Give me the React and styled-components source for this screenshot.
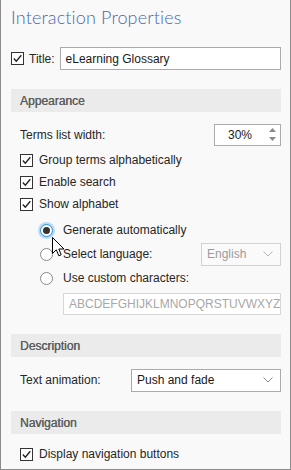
import React from "react";
import styled, { createGlobalStyle, css } from "styled-components";

const Global = createGlobalStyle`
  html, body { margin: 0; padding: 0; background: #f9f9f9; }
  #root { width: 291px; height: 470px; }
  * { box-sizing: border-box; }
`;

const Panel = styled.div`
  position: relative;
  width: 291px;
  height: 470px;
  background: #f9f9f9;
  border: 1px solid #8c8c8c;
  border-top: none;
  padding: 0 9px 0 10px;
  display: flex;
  flex-direction: column;
  font-family: "Liberation Sans", Arial, sans-serif;
  font-size: 12px;
  color: #262626;
  overflow: hidden;
`;

const Heading = styled.h1`
  margin: 5px 0 0 0;
  height: 25px;
  line-height: 25px;
  font-family: Lato, "Open Sans", sans-serif;
  font-weight: 300;
  font-size: 18px;
  color: #4b68ae;
  letter-spacing: 0.15px;
`;

const Row = styled.div`
  display: flex;
  align-items: center;
  height: ${(p) => p.$h || 22}px;
  margin-top: ${(p) => p.$mt || 0}px;
  padding-left: ${(p) => p.$indent || 0}px;
`;

const SectionHeader = styled.div`
  height: 23px;
  margin-top: ${(p) => p.$mt || 0}px;
  background: #ebebeb;
  padding-left: 9px;
  display: flex;
  align-items: center;
  color: #5e5e5e;
  font-size: 12px;
  font-weight: 400;
  text-shadow: 0.3px 0 0 #5e5e5e;
`;

const Body = styled.div`
  display: flex;
  flex-direction: column;
  padding-left: 9px;
`;

const Box = styled.span`
  width: 13px;
  height: 13px;
  flex: none;
  border: 1px solid #333;
  background: #fff;
  display: inline-flex;
  align-items: center;
  justify-content: center;
  margin-right: ${(p) => p.$mr || 6}px;
`;

const Label = styled.span`
  white-space: nowrap;
  color: ${(p) => (p.$disabled ? "#9a9a9a" : "#262626")};
`;

const Spacer = styled.span`
  flex: 1;
`;

const Gap = styled.span`
  flex: none;
  width: ${(p) => p.$w}px;
`;

const VGap = styled.div`
  height: ${(p) => p.$h}px;
`;

const TextInput = styled.div`
  height: ${(p) => p.$h || 23}px;
  flex: ${(p) => (p.$grow ? 1 : "none")};
  background: #fff;
  border: 1px solid ${(p) => p.$border || "#ababab"};
  display: flex;
  align-items: center;
  padding: 0 5px;
  color: ${(p) => p.$color || "#1a1a1a"};
  white-space: nowrap;
  overflow: hidden;
  font-size: 12px;
`;

const Spin = styled.div`
  width: 67px;
  height: 22px;
  background: #fff;
  border: 1px solid #ababab;
  display: flex;
  align-items: center;
  position: relative;
  padding-left: 13px;
  color: #1a1a1a;
`;

const SpinArrows = styled.div`
  position: absolute;
  right: 4px;
  top: 3px;
  display: flex;
  flex-direction: column;
  gap: 5px;
`;

const Select = styled.div`
  height: ${(p) => p.$h || 22}px;
  width: ${(p) => p.$w}px;
  flex: none;
  background: ${(p) => (p.$disabled ? "#fafafa" : "#fff")};
  border: 1px solid ${(p) => (p.$disabled ? "#d2d2d2" : "#ababab")};
  display: flex;
  align-items: center;
  justify-content: space-between;
  padding: 0 7px 0 5px;
  color: ${(p) => (p.$disabled ? "#9a9a9a" : "#1a1a1a")};
`;

const Radio = styled.span`
  width: 13px;
  height: 13px;
  flex: none;
  border-radius: 50%;
  background: #fff;
  margin: 0 10px 0 20px;
  display: inline-flex;
  align-items: center;
  justify-content: center;
  ${(p) =>
    p.$checked
      ? css`
          border: 1px solid #2e8ad8;
          box-shadow: 0 0 0 2px #b7dcf5;
        `
      : css`
          border: 1px solid #8a8a8a;
        `}
`;

const Dot = styled.span`
  width: 7px;
  height: 7px;
  border-radius: 50%;
  background: #333;
`;

const Cursor = styled.svg`
  position: absolute;
  left: 51px;
  top: 237px;
  pointer-events: none;
`;

const Check = () => (
  <svg width="11" height="11" viewBox="0 0 11 11">
    <path d="M1.8 5.6 L4.3 8.2 L9.3 2.2" fill="none" stroke="#222" strokeWidth="1.4" />
  </svg>
);

const Chevron = ({ color = "#8a8a8a" }) => (
  <svg width="10" height="6" viewBox="0 0 10 6">
    <path d="M0.5 0.5 L5 5 L9.5 0.5" fill="none" stroke={color} strokeWidth="1" />
  </svg>
);

const CheckRow = ({ children, mt }) => (
  <Row $h={22} $mt={mt}>
    <Box>
      <Check />
    </Box>
    <Label>{children}</Label>
  </Row>
);

const RadioRow = ({ checked, children, after }) => (
  <Row $h={24}>
    <Radio $checked={checked}>{checked && <Dot />}</Radio>
    <Label>{children}</Label>
    {after}
  </Row>
);

export default function App() {
  return (
    <>
      <Global />
      <Panel>
        <Heading>Interaction Properties</Heading>
        <Row $h={23} $mt={17}>
          <Box $mr={5}>
            <Check />
          </Box>
          <Label>Title:</Label>
          <Gap $w={5} />
          <TextInput $grow $h={23}>
            eLearning Glossary
          </TextInput>
        </Row>

        <SectionHeader $mt={19}>Appearance</SectionHeader>
        <Body>
          <Row $h={22} $mt={12}>
            <Label>Terms list width:</Label>
            <Spacer />
            <Spin>
              30%
              <SpinArrows>
                <svg width="7" height="4" viewBox="0 0 7 4">
                  <path d="M0 4 L3.5 0 L7 4 Z" fill="#8a8a8a" />
                </svg>
                <svg width="7" height="4" viewBox="0 0 7 4">
                  <path d="M0 0 L3.5 4 L7 0 Z" fill="#8a8a8a" />
                </svg>
              </SpinArrows>
            </Spin>
          </Row>
          <CheckRow mt={3}>Group terms alphabetically</CheckRow>
          <CheckRow>Enable search</CheckRow>
          <CheckRow>Show alphabet</CheckRow>
          <VGap $h={3} />
          <RadioRow checked>Generate automatically</RadioRow>
          <RadioRow
            after={
              <>
                <Spacer />
                <Select $disabled $w={80} $h={23}>
                  English
                  <Chevron color="#b5b5b5" />
                </Select>
              </>
            }
          >
            Select language:
          </RadioRow>
          <RadioRow>Use custom characters:</RadioRow>
          <Row $h={22} $mt={3} $indent={43}>
            <TextInput $grow $h={22} $border="#d6d6d6" $color="#a8a8a8">
              ABCDEFGHIJKLMNOPQRSTUVWXYZ
            </TextInput>
          </Row>
        </Body>

        <SectionHeader $mt={19}>Description</SectionHeader>
        <Body>
          <Row $h={22} $mt={12}>
            <Label>Text animation:</Label>
            <Spacer />
            <Select $w={150} $h={23}>
              Push and fade
              <Chevron />
            </Select>
          </Row>
        </Body>

        <SectionHeader $mt={20}>Navigation</SectionHeader>
        <Body>
          <CheckRow mt={9}>Display navigation buttons</CheckRow>
        </Body>

        <Cursor width="14" height="22" viewBox="0 0 14 22">
          <path
            d="M0.5 0.5 L0.5 16.5 L4.3 12.8 L6.8 18.8 L9.2 17.8 L6.8 12 L12 12 Z"
            fill="#fff"
            stroke="#000"
            strokeWidth="1"
            strokeLinejoin="miter"
          />
        </Cursor>
      </Panel>
    </>
  );
}
